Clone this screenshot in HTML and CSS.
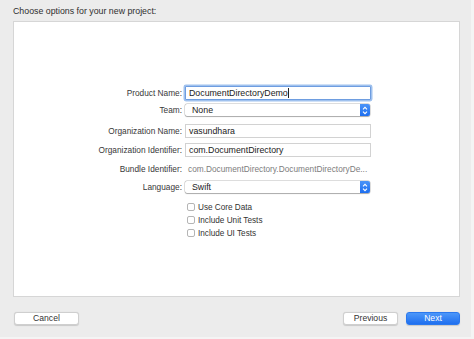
FILE: index.html
```html
<!DOCTYPE html>
<html lang="en">
<head>
    <meta charset="UTF-8">
    <meta name="viewport" content="width=device-width, initial-scale=1.0">
    <title>Choose options for your new project</title>
    <link rel="stylesheet" href="styles.css">
</head>
<body>
    <div class="sheet">
        <div class="sheet-title">Choose options for your new project:</div>

        <div class="panel">
            <div class="form">
                <div class="row row-product">
                    <label class="row-label">Product Name:</label>
                    <div class="text-field focused">DocumentDirectoryDemo<span class="caret"></span></div>
                </div>
                <div class="row row-team">
                    <label class="row-label">Team:</label>
                    <div class="popup">
                        <span>None</span>
                        <span class="stepper">
                            <svg width="6" height="9" viewBox="0 0 6 9"><path d="M1 3.3 L3 1.3 L5 3.3 M1 5.7 L3 7.7 L5 5.7" fill="none" stroke="#fff" stroke-width="1.1"/></svg>
                        </span>
                    </div>
                </div>
                <div class="row row-org">
                    <label class="row-label">Organization Name:</label>
                    <div class="text-field">vasundhara</div>
                </div>
                <div class="row row-orgid">
                    <label class="row-label">Organization Identifier:</label>
                    <div class="text-field">com.DocumentDirectory</div>
                </div>
                <div class="row row-bundle">
                    <label class="row-label">Bundle Identifier:</label>
                    <div class="static-value">com.DocumentDirectory.DocumentDirectoryDe...</div>
                </div>
                <div class="row row-language">
                    <label class="row-label">Language:</label>
                    <div class="popup">
                        <span>Swift</span>
                        <span class="stepper">
                            <svg width="6" height="9" viewBox="0 0 6 9"><path d="M1 3.3 L3 1.3 L5 3.3 M1 5.7 L3 7.7 L5 5.7" fill="none" stroke="#fff" stroke-width="1.1"/></svg>
                        </span>
                    </div>
                </div>
                <div class="row row-check first-check">
                    <span></span>
                    <div class="check"><span class="box"></span>Use Core Data</div>
                </div>
                <div class="row row-check">
                    <span></span>
                    <div class="check"><span class="box"></span>Include Unit Tests</div>
                </div>
                <div class="row row-check">
                    <span></span>
                    <div class="check"><span class="box"></span>Include UI Tests</div>
                </div>
            </div>
        </div>

        <div class="footer">
            <button class="btn btn-cancel">Cancel</button>
            <div class="footer-right">
                <button class="btn btn-previous">Previous</button>
                <button class="btn btn-next">Next</button>
            </div>
        </div>
    </div>
</body>
</html>
```

FILE: styles.css
```css
body {
    margin: 0;
    background: #ececec;
    font-family: 'Liberation Sans', Arial, sans-serif;
    font-size: 8.8px;
    color: #2b2b2b;
    width: 474px;
    height: 339px;
    box-sizing: border-box;
    border-right: 3px solid #f4f4f4;
    border-bottom: 2px solid #f4f4f4;
    overflow: hidden;
}

.sheet {
    padding: 0 11px 0 13px;
}

.sheet-title {
    height: 21px;
    line-height: 22px;
    color: #2e2e2e;
}

/* White content area */
.panel {
    height: 274px;
    background: #ffffff;
    border: 1px solid #d6d6d6;
}

.form {
    padding-top: 64px;
}

.row {
    display: grid;
    grid-template-columns: 168px 186px;
    column-gap: 3px;
    align-items: center;
    height: 14px;
}

.row-team { margin-top: 3px; }
.row-org { margin-top: 7px; }
.row-orgid { margin-top: 5px; }
.row-bundle { margin-top: 5px; }
.row-language { margin-top: 4px; }
.row-check { height: 12px; margin-top: 1px; }
.first-check { margin-top: 7px; }

.row-label {
    text-align: right;
    font-size: 8.3px;
    color: #383838;
    white-space: nowrap;
}

.text-field {
    height: 14px;
    box-sizing: border-box;
    border: 1px solid #d2d2d2;
    background: #fff;
    padding-left: 3px;
    line-height: 12px;
    color: #222;
    white-space: nowrap;
}

.text-field.focused {
    border-color: #6e9de0;
    box-shadow: 0 0 0 1.5px #9fc1ee;
    border-radius: 1px;
}

.caret {
    display: inline-block;
    width: 1px;
    height: 10px;
    background: #222;
    vertical-align: -2px;
}

.static-value {
    padding-left: 3px;
    font-size: 8.3px;
    color: #7d7d7d;
    white-space: nowrap;
}

/* Pop-up buttons */
.popup {
    height: 12px;
    width: 185px;
    box-sizing: border-box;
    display: flex;
    justify-content: space-between;
    align-items: center;
    background: #fff;
    border-radius: 2px;
    box-shadow: 0 0 0 0.5px rgba(0,0,0,0.22), 0 0.5px 1px rgba(0,0,0,0.25);
    padding-left: 7px;
    color: #222;
}

.stepper {
    width: 10px;
    height: 12px;
    background: linear-gradient(#4a94f8, #1d6ef0);
    border-radius: 0 2px 2px 0;
    display: flex;
    align-items: center;
    justify-content: center;
}

.check {
    display: flex;
    align-items: center;
    padding-left: 2px;
    font-size: 8.2px;
    color: #333;
}

.box {
    width: 8px;
    height: 8px;
    box-sizing: border-box;
    border: 1px solid #b5b5b5;
    border-radius: 2px;
    background: #fff;
    margin-right: 3px;
}

/* Bottom buttons */
.footer {
    display: flex;
    justify-content: space-between;
    padding-top: 15px;
}

.footer-right {
    display: flex;
    gap: 8px;
}

.btn {
    font-family: inherit;
    font-size: 8.6px;
    height: 13px;
    padding: 0;
    line-height: 11px;
    border-radius: 3px;
    background: #fff;
    border: 1px solid #cfcfcf;
    box-shadow: 0 0.5px 1px rgba(0,0,0,0.15);
    color: #333;
}

.btn-cancel { width: 65px; margin-left: 1px; }
.btn-previous { width: 55px; }

.btn-next {
    width: 54px;
    color: #fff;
    border-color: #2a78ee;
    background: linear-gradient(#4c97f9, #1f6fef);
}
```
